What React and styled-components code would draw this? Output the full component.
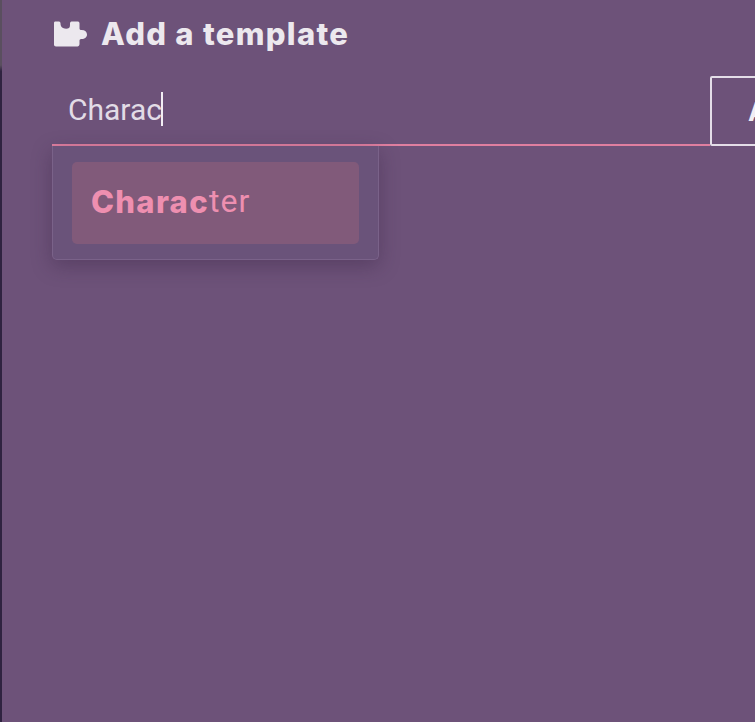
import React from "react"
import styled, { createGlobalStyle } from "styled-components"

const GlobalStyle = createGlobalStyle`
html, body {
  margin: 0;
  padding: 0;
  height: 100%;
  overflow: hidden;
  background: #6d5279;
}
#root {
  height: 100%;
}
`;

const Page = styled.div`
  height: 722px;
  width: 755px;
  box-sizing: border-box;
  overflow: hidden;
  background: #6d5279;
  border-left: 2px solid;
  border-image: linear-gradient(#5a4f5f 0 66px, #2f2340 72px) 1;
  padding: 0 0 0 50px;
  font-family: "Inter", "Roboto", sans-serif;
  color: #ece8ee;
`;

const Heading = styled.h2`
  display: flex;
  align-items: center;
  gap: 13px;
  margin: 0;
  height: 67px;
  padding: 0 0 0 1px;
  font-size: 31px;
  font-weight: 800;
  letter-spacing: 1.3px;
  color: #ece8ee;
`;

const PuzzleIcon = styled.svg`
  width: 35px;
  height: 26px;
  flex: none;
`;

const Form = styled.div`
  display: flex;
  width: 800px;
  margin-top: 9px;
`;

const Field = styled.div`
  position: relative;
  width: 658px;
  height: 70px;
  box-sizing: border-box;
  flex: none;
  border-bottom: 2px solid #e07fa0;
`;

const InputText = styled.div`
  display: flex;
  align-items: center;
  height: 66px;
  padding-left: 16px;
  font-family: "Roboto", sans-serif;
  font-size: 30px;
  color: #e2dce6;
`;

const Caret = styled.span`
  display: inline-block;
  width: 2px;
  height: 34px;
  margin-left: -1px;
  background: #f2eef4;
`;

const AddButton = styled.button`
  flex: none;
  width: 120px;
  height: 70px;
  box-sizing: border-box;
  margin: 0;
  padding: 0 0 0 36px;
  text-align: left;
  background: transparent;
  border: 2px solid #e4dee8;
  border-radius: 2px;
  font-family: "Inter", sans-serif;
  font-size: 26px;
  font-weight: 700;
  color: #f2eef4;
`;

const Dropdown = styled.div`
  position: absolute;
  top: 70px;
  left: 0;
  width: 327px;
  height: 114px;
  box-sizing: border-box;
  padding: 16px 19px;
  background: #6a537a;
  border: 1px solid #7a6289;
  border-top: none;
  border-radius: 0 0 5px 5px;
  box-shadow: 0 6px 20px rgba(50, 30, 60, 0.35);
`;

const Option = styled.div`
  display: flex;
  align-items: center;
  height: 82px;
  box-sizing: border-box;
  padding: 0 0 4px 19px;
  background: #815a7a;
  border-radius: 5px;
  color: #ee8fb0;
`;

const Match = styled.strong`
  font-size: 31px;
  font-weight: 800;
  letter-spacing: 1.3px;
`;

const Rest = styled.span`
  font-family: "Roboto", sans-serif;
  font-size: 32px;
  font-weight: 400;
  letter-spacing: 1.1px;
`;

const App = () => {
  return (
    <Page>
      <GlobalStyle />
      <Heading>
        <PuzzleIcon viewBox="0 0 35 26" aria-hidden="true">
          <path
            fill="#ece8ee"
            d="M1 2c0-1 .5-1.500 1.500-1.500H6c1 0 1.500 1 1.500 2 0 2 .8 3.500 2.500 4.500 2 1 4.500 1 6 0 1-1 1-2.500 1-4.500 0-1 .5-2 1.500-2H25c1 0 1.500 1 1.500 2v5c0 1 1 1.500 2 1.500 3.500 0 5.500 1.800 5.500 4.500s-2 4.500-5.500 4.500c-1 0-2 .5-2 1.500v3.500c0 1.500-1 2.500-2 2.500H3c-1.200 0-2-1-2-2z"
          />
        </PuzzleIcon>
        Add a template
      </Heading>
      <Form>
        <Field>
          <InputText>
            Charac
            <Caret />
          </InputText>
          <Dropdown>
            <Option>
              <Match>Charac</Match>
              <Rest>ter</Rest>
            </Option>
          </Dropdown>
        </Field>
        <AddButton>Add</AddButton>
      </Form>
    </Page>
  );
};

export default App;
